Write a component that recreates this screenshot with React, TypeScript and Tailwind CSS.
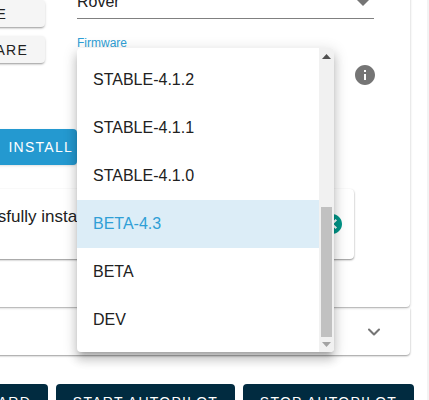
import { ChevronDown } from "lucide-react";

const MENU_ITEMS = ["STABLE-4.1.2", "STABLE-4.1.1", "STABLE-4.1.0", "BETA-4.3", "BETA", "DEV"];

function SmallButton({ label, className }: { label: string; className: string }) {
  return (
    <div className={`flex h-[27px] w-[105px] items-center justify-end rounded bg-[#f5f5f5] text-sm tracking-[1.25px] text-[#212121] shadow-[0_2px_2px_-1px_rgba(0,0,0,0.3),0_1px_3px_rgba(0,0,0,0.15)] ${className}`}>
      {label}
    </div>
  );
}

function DarkButton({ label, className }: { label: string; className: string }) {
  return (
    <div className={`flex h-9 shrink-0 items-center justify-center rounded bg-[#012b40] text-sm tracking-[1.25px] text-white ${className}`}>
      {label}
    </div>
  );
}

function FirmwareMenu() {
  return (
    <div className="absolute left-[77px] top-[48px] flex h-[304px] w-[257px] overflow-hidden rounded bg-white shadow-[0_5px_5px_-3px_rgba(0,0,0,0.2),0_8px_10px_1px_rgba(0,0,0,0.14),0_3px_14px_2px_rgba(0,0,0,0.12)]">
      <div className="flex-1 py-2">
        {MENU_ITEMS.map((item) => (
          <div
            key={item}
            className={
              item === "BETA-4.3"
                ? "flex h-12 items-center bg-[#dcedf7] pl-4 text-base text-[#2f9fd6]"
                : "flex h-12 items-center pl-4 text-base text-[#212121]"
            }
          >
            {item}
          </div>
        ))}
      </div>
      <div className="flex w-[15px] flex-col items-center bg-[#f1f1f1]">
        <svg width="9" height="5" viewBox="0 0 9 5" className="mt-[6px]">
          <path d="M4.5 0 L9 5 H0 Z" fill="#505050" />
        </svg>
        <div className="mt-[148px] h-[130px] w-[11px] bg-[#c1c1c1]" />
        <svg width="9" height="5" viewBox="0 0 9 5" className="mt-[5px]">
          <path d="M0 0 H9 L4.5 5 Z" fill="#a3a3a3" />
        </svg>
      </div>
    </div>
  );
}

export default function App() {
  return (
    <div className="relative h-[400px] w-[429px] overflow-hidden border-r-2 border-[#f3f3f3] bg-white font-['Liberation_Sans',Arial,sans-serif]">
      <div className="ml-[-60px] mt-[-60px] w-[470px]">
        <div className="relative h-[367px] rounded bg-white shadow-[0_1px_3px_rgba(0,0,0,0.2),0_1px_1px_rgba(0,0,0,0.14)]">
          <div className="flex pt-[24px]">
            <div className="flex flex-col gap-[9px]">
              <div className="h-[27px] w-[105px] rounded bg-[#f5f5f5] shadow" />
              <SmallButton label="E" className="pr-[38px]" />
              <SmallButton label="ARE" className="pr-[17px]" />
            </div>
            <div className="ml-8 w-[297px]">
              <div className="flex h-[55px] items-end justify-between border-b border-[#808080] pb-1 text-base text-[#212121]">
                <span>Rover</span>
                <svg width="14" height="7" viewBox="0 0 14 7" className="mb-[8px] mr-1">
                  <path d="M0 0 H14 L7 7 Z" fill="#757575" />
                </svg>
              </div>
              <div className="mt-[16px] text-xs text-[#2f9fd6]">Firmware</div>
            </div>
            <svg viewBox="0 0 24 24" className="ml-[-21px] mt-[99px] h-6 w-6 fill-[#757575]">
              <path d="M12 2C6.48 2 2 6.48 2 12s4.48 10 10 10 10-4.48 10-10S17.52 2 12 2zm1 15h-2v-6h2v6zm0-8h-2V7h2v2z" />
            </svg>
          </div>
          <div className="mt-[42px] flex h-9 w-[137px] items-center justify-end rounded bg-[#2499d0] pr-[4px] text-sm tracking-[1.25px] text-white shadow">
            INSTALL
          </div>
          <div className="relative mt-[24px] flex h-[70px] w-[414px] items-start rounded bg-white pl-[2px] pt-[15px] text-[17px] text-[#212121] shadow-[0_1px_2px_rgba(0,0,0,0.45)]">
            <span className="whitespace-nowrap">Successfully installed</span>
            <svg viewBox="0 0 24 24" className="absolute left-[380px] top-[23px] h-6 w-6 fill-[#009688]">
              <path d="M12 2C6.47 2 2 6.47 2 12s4.47 10 10 10 10-4.47 10-10S17.53 2 12 2zm5 13.59L15.59 17 12 13.41 8.41 17 7 15.59 10.59 12 7 8.41 8.41 7 12 10.59 15.59 7 17 8.41 13.41 12 17 15.59z" />
            </svg>
          </div>
        </div>
        <div className="mt-px flex h-[47px] items-center justify-end rounded-b bg-white pr-[26px] shadow-[0_1px_2px_rgba(0,0,0,0.4)]">
          <ChevronDown size={20} strokeWidth={2.5} className="text-[#757575]" />
        </div>
        <div className="mt-[29px] flex gap-2">
          <DarkButton label="DASHBOARD" className="w-[108px] justify-end pr-[17px]" />
          <DarkButton label="START AUTOPILOT" className="w-[179px]" />
          <DarkButton label="STOP AUTOPILOT" className="w-[171px]" />
        </div>
      </div>
      <FirmwareMenu />
    </div>
  );
}
